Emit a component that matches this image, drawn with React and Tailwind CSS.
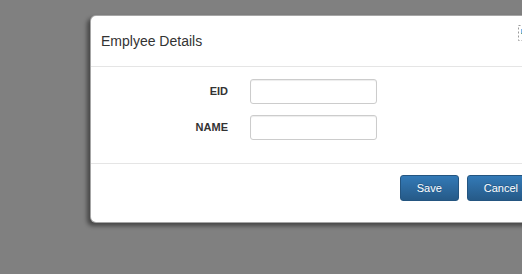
import React from "react";

// broken-image placeholder that stands where the close button would be
function BrokenImage() {
  return (
    <svg width="16" height="16" viewBox="0 0 16 16" className="block">
      <rect x="0.5" y="0.5" width="15" height="15" fill="none" stroke="#9a9a9a" strokeDasharray="2 2" />
      <rect x="3" y="4" width="6" height="5" fill="#7fb2e5" />
      <path d="M3 9 L5 6.5 L7 9 Z" fill="#5a9a3a" />
      <rect x="6" y="7" width="3" height="3" fill="#e8a33c" />
    </svg>
  );
}

function Field({ label }) {
  return (
    <div className="flex items-center">
      <label className="w-[137px] text-right text-[11px] font-bold text-[#333]">
        {label}
      </label>
      <input
        type="text"
        className="ml-[22px] w-[127px] h-[25px] rounded-[3px] border border-[#ccc] bg-white shadow-[inset_0_1px_1px_rgba(0,0,0,0.075)] outline-none"
      />
    </div>
  );
}

function PrimaryButton({ children }) {
  return (
    <button className="h-[26px] px-[16px] rounded-[3px] border border-[#245580] bg-gradient-to-b from-[#337ab7] to-[#265a88] text-[11px] text-white [text-shadow:0_-1px_0_rgba(0,0,0,0.2)]">
      {children}
    </button>
  );
}

export default function App() {
  return (
    <div
      className="h-[274px] w-full overflow-hidden bg-[#808080] pt-[15px] pl-[90px]"
      style={{ fontFamily: '"Liberation Sans", Arial, sans-serif' }}
    >
      <div className="w-[460px] rounded-[6px] border border-[rgba(0,0,0,0.35)] bg-white shadow-[-3px_3px_4px_rgba(0,0,0,0.45)]">
        {/* header */}
        <div className="flex items-start justify-between border-b border-[#e5e5e5] pl-[10px] pr-[15px] pt-[15px] pb-[15px]">
          <h4 className="text-[14px] leading-[20px] text-[#333]">Emplyee Details</h4>
          <div className="mt-[-6px]">
            <BrokenImage />
          </div>
        </div>

        {/* body */}
        <div className="flex flex-col gap-[11px] pt-[12px] pb-[23px]">
          <Field label="EID" />
          <Field label="NAME" />
        </div>

        {/* footer */}
        <div className="flex justify-end gap-[8px] border-t border-[#e5e5e5] pt-[11px] pb-[21px] pr-[14px]">
          <PrimaryButton>Save</PrimaryButton>
          <PrimaryButton>Cancel</PrimaryButton>
        </div>
      </div>
    </div>
  );
}
